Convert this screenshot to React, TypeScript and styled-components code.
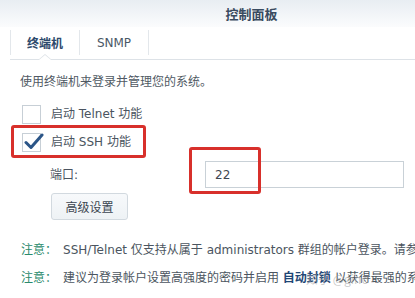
import React from "react";
import styled, { createGlobalStyle } from "styled-components";

const Global = createGlobalStyle`
  html, body { margin: 0; padding: 0; background: #fff; }
  body {
    width: 415px; height: 298px; overflow: hidden;
    font-family: "DejaVu Sans", "Noto Sans CJK SC", sans-serif;
    font-size: 12px; color: #4c5660;
  }
`;

const Page = styled.div`
  width: 415px;
  height: 298px;
  overflow: hidden;
  position: relative;
`;

const Header = styled.div`
  height: 27px;
  display: flex;
  align-items: center;
  justify-content: center;
  padding-left: 88px;
  background: linear-gradient(#e8edf2, #fbfcfd);
`;

const Title = styled.div`
  font-family: "Noto Sans CJK SC", sans-serif;
  font-size: 13px;
  font-weight: 600;
  color: #3a4b60;
  letter-spacing: 0px;
`;

const TabBar = styled.div`
  margin: 3px 0 0 10px;
  height: 29px;
  display: flex;
  border-bottom: 1px solid #dde2e7;
`;

const Tab = styled.div<{ $active?: boolean }>`
  position: relative;
  width: 68px;
  height: 25px;
  border-left: 1px solid #e3e7eb;
  display: flex;
  align-items: center;
  justify-content: center;
  font-family: "DejaVu Sans", "Noto Sans CJK SC", sans-serif;
  font-size: 12px;
  font-weight: ${(p) => (p.$active ? 600 : 400)};
  color: ${(p) => (p.$active ? "#2e4a6c" : "#4a5866")};
  &:last-child { border-right: 1px solid #e3e7eb; }
`;

const Caret = styled.span`
  position: absolute;
  left: 27px;
  bottom: -5px;
  width: 0;
  height: 0;
  border-left: 7px solid transparent;
  border-right: 7px solid transparent;
  border-bottom: 6px solid #dde2e7;
  &::after {
    content: "";
    position: absolute;
    left: -6px;
    top: 1px;
    border-left: 6px solid transparent;
    border-right: 6px solid transparent;
    border-bottom: 5px solid #fff;
  }
`;

const Content = styled.div`
  padding-left: 20px;
`;

const Desc = styled.div`
  margin-top: 12px;
  line-height: 20px;
  color: #4f5963;
`;

const CheckRow = styled.div<{ $gap: number; $highlight?: boolean }>`
  position: relative;
  margin-top: ${(p) => p.$gap}px;
  margin-left: 2px;
  height: 18px;
  display: flex;
  align-items: center;
  gap: 10px;
  &::before {
    content: "";
    display: ${(p) => (p.$highlight ? "block" : "none")};
    position: absolute;
    left: -11px;
    top: -8px;
    width: 129px;
    height: 27px;
    border: 3px solid #d8302b;
    border-radius: 3px;
  }
`;

const Box = styled.span`
  position: relative;
  width: 17px;
  height: 17px;
  border: 1px solid #c7cfd6;
  background: #fff;
  flex: none;
  svg { position: absolute; left: 1px; top: -1px; }
`;

const Label = styled.span`
  color: #4a5460;
  line-height: 18px;
`;

const FieldRow = styled.div`
  margin-top: 10px;
  padding-left: 30px;
  display: grid;
  grid-template-columns: 155px 199px;
  align-items: center;
`;

const InputWrap = styled.div`
  position: relative;
  &::before {
    content: "";
    position: absolute;
    left: -16px;
    top: -14px;
    width: 66px;
    height: 41px;
    border: 3px solid #d8302b;
    border-radius: 3px;
  }
`;

const Input = styled.div`
  height: 25px;
  border: 1px solid #c9d1d7;
  background: #fff;
  display: flex;
  align-items: center;
  padding-left: 9px;
  font-size: 12px;
  color: #3f4750;
`;

const Button = styled.div`
  margin: 5px 0 0 31px;
  width: 75px;
  height: 25px;
  border: 1px solid #d2d9df;
  border-radius: 3px;
  background: linear-gradient(#f7f9fb, #eef2f5);
  display: flex;
  align-items: center;
  justify-content: center;
  color: #3b4550;
`;

const Note = styled.div<{ $gap: number }>`
  margin-top: ${(p) => p.$gap}px;
  margin-left: 1px;
  line-height: 20px;
  white-space: nowrap;
  color: #4b5560;
`;

const NoteTag = styled.span`
  color: #2a8a6c;
  margin-right: 6px;
`;

const Strong = styled.span`
  color: #1f4675;
  font-weight: 600;
`;

const Watermark = styled.span`
  position: absolute;
  left: 306px;
  top: 270px;
  font-size: 12px;
  color: rgba(160, 160, 160, 0.55);
  font-family: "Noto Sans CJK SC", sans-serif;
  white-space: nowrap;
`;

export default function App() {
  return (
    <Page>
      <Global />
      <Header>
        <Title>控制面板</Title>
      </Header>
      <TabBar>
        <Tab $active>
          终端机
          <Caret />
        </Tab>
        <Tab>SNMP</Tab>
      </TabBar>
      <Content>
        <Desc>使用终端机来登录并管理您的系统。</Desc>
        <CheckRow $gap={13}>
          <Box />
          <Label>启动 Telnet 功能</Label>
        </CheckRow>
        <CheckRow $gap={10} $highlight>
          <Box>
            <svg width="20" height="17" viewBox="0 0 20 17">
              <path d="M2 9.5 L7 14.5 L18 2" fill="none" stroke="#2b5587" strokeWidth="3" strokeLinecap="round" strokeLinejoin="round" />
            </svg>
          </Box>
          <Label>启动 SSH 功能</Label>
        </CheckRow>
        <FieldRow>
          <Label>端口:</Label>
          <InputWrap>
            <Input>22</Input>
          </InputWrap>
        </FieldRow>
        <Button>高级设置</Button>
        <Note $gap={20}>
          <NoteTag>注意：</NoteTag>SSH/Telnet 仅支持从属于 administrators 群组的帐户登录。请参阅帮助。
        </Note>
        <Note $gap={8}>
          <NoteTag>注意：</NoteTag>建议为登录帐户设置高强度的密码并启用 <Strong>自动封锁</Strong> 以获得最强的系统保护。
        </Note>
      </Content>
      <Watermark>知乎 @gino</Watermark>
    </Page>
  );
}
